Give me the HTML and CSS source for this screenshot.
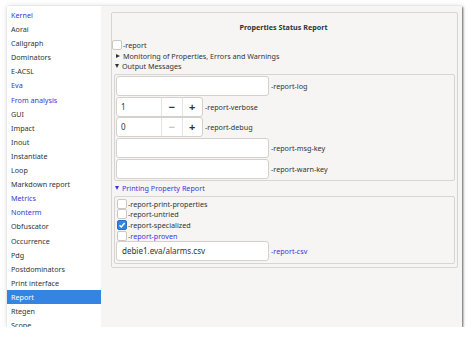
FILE: index.html
```html
<!DOCTYPE html>
<html lang="en">
  <head>
    <meta charset="UTF-8" />
    <meta name="viewport" content="width=device-width, initial-scale=1.0" />
    <title>Report</title>
    <link rel="stylesheet" href="styles.css">
  </head>
  <body>
    <div class="window">
      <!-- Plugin list -->
      <ul class="sidebar">
        <li class="link">Kernel</li>
        <li>Aorai</li>
        <li>Callgraph</li>
        <li>Dominators</li>
        <li>E-ACSL</li>
        <li class="link">Eva</li>
        <li class="link">From analysis</li>
        <li>GUI</li>
        <li>Impact</li>
        <li>Inout</li>
        <li>Instantiate</li>
        <li>Loop</li>
        <li>Markdown report</li>
        <li class="link">Metrics</li>
        <li class="link">Nonterm</li>
        <li>Obfuscator</li>
        <li>Occurrence</li>
        <li>Pdg</li>
        <li>Postdominators</li>
        <li>Print interface</li>
        <li class="selected">Report</li>
        <li>Rtegen</li>
        <li>Scope</li>
      </ul>

      <div class="main">
        <div class="frame">
          <div class="title">Properties Status Report</div>

          <label class="check"><span class="box"></span>-report</label>
          <div class="expander">
            <span class="arrow closed"></span>Monitoring of Properties, Errors and Warnings
          </div>
          <div class="expander">
            <span class="arrow"></span>Output Messages
          </div>

          <div class="section">
            <div class="row">
              <div class="entry"></div>
              <span class="opt">-report-log</span>
            </div>
            <div class="row">
              <div class="spin">
                <span class="value">1</span>
                <span class="btn">&minus;</span>
                <span class="btn">+</span>
              </div>
              <span class="opt">-report-verbose</span>
            </div>
            <div class="row">
              <div class="spin">
                <span class="value">0</span>
                <span class="btn off">&minus;</span>
                <span class="btn">+</span>
              </div>
              <span class="opt">-report-debug</span>
            </div>
            <div class="row">
              <div class="entry"></div>
              <span class="opt">-report-msg-key</span>
            </div>
            <div class="row">
              <div class="entry"></div>
              <span class="opt">-report-warn-key</span>
            </div>
          </div>

          <div class="expander link">
            <span class="arrow"></span>Printing Property Report
          </div>

          <div class="section">
            <label class="check"><span class="box"></span>-report-print-properties</label>
            <label class="check"><span class="box"></span>-report-untried</label>
            <label class="check">
              <span class="box on">
                <svg width="8" height="8" viewBox="0 0 8 8">
                  <path d="M1.5 4.2 L3.3 6 L6.6 2" fill="none" stroke="#fff" stroke-width="1.4" />
                </svg>
              </span>-report-specialized
            </label>
            <label class="check link"><span class="box"></span>-report-proven</label>
            <div class="row">
              <div class="entry">debie1.eva/alarms.csv</div>
              <span class="opt link">-report-csv</span>
            </div>
          </div>
        </div>
      </div>
    </div>
  </body>
</html>
```

FILE: styles.css
```css
body {
  margin: 0;
  background-color: #ffffff;
  font-family: "Noto Sans", sans-serif;
  font-size: 7.2px;
  color: #2e3436;
}

.window {
  display: flex;
  margin: 6px 0 0 7px;
  width: 455px;
  height: 321px;
  background-color: #f6f5f4;
  box-shadow: 1px 1px 2px rgba(0, 0, 0, 0.6), 0 0 6px rgba(0, 0, 0, 0.12);
  overflow: hidden;
}

.link {
  color: #3b35d8;
}

/* sidebar */
.sidebar {
  list-style: none;
  margin: 0;
  padding: 2px 0 0 0;
  width: 94px;
  flex-shrink: 0;
  background-color: #ffffff;
}

.sidebar li {
  height: 14.1px;
  line-height: 14.1px;
  padding-left: 4px;
  white-space: nowrap;
}

.sidebar li.selected {
  background-color: #3584e4;
  color: #ffffff;
}

/* main panel */
.main {
  flex: 1;
  padding: 6px 4px 0 10px;
}

.frame {
  border: 1px solid #d8d4d0;
  border-radius: 2px;
  padding: 0 2px 1px 0;
}

.title {
  text-align: center;
  font-weight: bold;
  padding: 9px 0 8px 0;
  line-height: 10px;
}

.check {
  display: flex;
  align-items: center;
  height: 10.6px;
  line-height: 10px;
}

.box {
  display: inline-flex;
  align-items: center;
  justify-content: center;
  width: 8px;
  height: 8px;
  margin-right: 1px;
  border: 1px solid #cdc7c2;
  border-radius: 2px;
  background-color: #ffffff;
}

.box.on {
  background-color: #3584e4;
  border-color: #2a6fc4;
}

.expander {
  display: flex;
  align-items: center;
  height: 10.5px;
  padding-left: 3px;
}

.arrow {
  width: 0;
  height: 0;
  margin-right: 3px;
  border-left: 2.5px solid transparent;
  border-right: 2.5px solid transparent;
  border-top: 4px solid currentColor;
}

.arrow.closed {
  margin-left: 1px;
  margin-right: 3px;
  border-top: 2.5px solid transparent;
  border-bottom: 2.5px solid transparent;
  border-left: 4px solid currentColor;
  border-right: none;
}

.section {
  margin: 2px 0 2px 2px;
  border: 1px solid #d8d4d0;
  border-radius: 2px;
  padding: 1px 0 1px 1px;
}

.section .check {
  padding-left: 1px;
}

.section .check:first-child {
  margin-top: 1px;
}

.row {
  display: flex;
  align-items: center;
  height: 20.7px;
}

.entry {
  box-sizing: border-box;
  width: 153px;
  height: 20px;
  padding-left: 5px;
  line-height: 18px;
  background-color: #ffffff;
  border: 1px solid #d5d0cc;
  border-radius: 3px;
  font-size: 8px;
}

.opt {
  margin-left: 2px;
}

.spin {
  box-sizing: border-box;
  display: flex;
  width: 87px;
  height: 20px;
  background-color: #ffffff;
  border: 1px solid #d5d0cc;
  border-radius: 3px;
}

.spin .value {
  width: 40px;
  padding-left: 4px;
  line-height: 18px;
  font-size: 8px;
}

.spin .btn {
  flex: 1;
  text-align: center;
  line-height: 18px;
  font-size: 11px;
  font-weight: bold;
  border-left: 1px solid #e6e2de;
}

.spin .btn.off {
  color: #c8c6c4;
}
```
